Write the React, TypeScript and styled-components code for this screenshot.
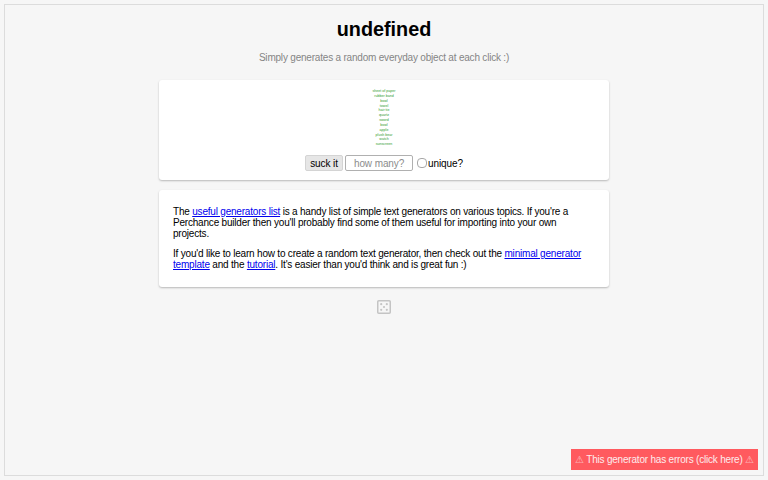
import React from "react";
import styled, { createGlobalStyle } from "styled-components";

const GlobalStyle = createGlobalStyle`
	html, body {
		margin: 0;
		height: 100%;
		background: #f6f6f6;
	}
	body {
		font-family: "Liberation Sans", Arial, sans-serif;
		overflow: hidden;
	}
`;

const Frame = styled.div`
	box-sizing: border-box;
	position: relative;
	width: 760px;
	height: 472px;
	margin: 4px;
	border: 1px solid #dcdcdc;
	display: flex;
	flex-direction: column;
	align-items: center;
`;

const Title = styled.h1`
	margin: 13px 0 0;
	font-size: 19.8px;
	line-height: 23px;
	font-weight: 700;
	color: #000;
`;

const Subtitle = styled.p`
	margin: 10px 0 0;
	font-size: 10px;
	letter-spacing: -0.2px;
	line-height: 13px;
	color: #858585;
`;

const Card = styled.section`
	box-sizing: border-box;
	width: 450px;
	background: #fff;
	border-radius: 3px;
	box-shadow: 0 1px 2px rgba(0, 0, 0, 0.25);
`;

const OutputCard = styled(Card)`
	margin-top: 16px;
	padding: 9px 0;
	height: 100px;
	display: flex;
	flex-direction: column;
	align-items: center;
`;

const ObjectList = styled.div`
	font-size: 3.6px;
	line-height: 4.85px;
	color: #2e9a2e;
	text-align: center;
	height: 58px;
`;

const Controls = styled.div`
	display: flex;
	align-items: center;
	margin-top: 8px;
	height: 16px;
`;

const SuckButton = styled.button`
	box-sizing: border-box;
	width: 38px;
	height: 16px;
	padding: 0;
	border: 1px solid #d4d4d4;
	border-radius: 2px;
	background: #e6e6e6;
	font-family: inherit;
	font-size: 10px;
	letter-spacing: -0.1px;
	color: #000;
`;

const CountInput = styled.input`
	box-sizing: border-box;
	width: 68px;
	height: 16px;
	margin-left: 2px;
	padding: 0;
	border: 1px solid #b0b0b0;
	border-radius: 2px;
	background: #fff;
	font-family: inherit;
	font-size: 10px;
	letter-spacing: -0.1px;
	text-align: center;

	&::placeholder {
		color: #8c8c8c;
	}
`;

const UniqueLabel = styled.label`
	display: flex;
	align-items: center;
	margin-left: 4px;
	font-size: 10px;
	letter-spacing: -0.1px;
	color: #000;
`;

const UniqueBox = styled.span`
	box-sizing: border-box;
	width: 10px;
	height: 10px;
	margin-right: 1px;
	border: 1px solid #a8a8a8;
	border-radius: 4px;
	background: #fff;
`;

const InfoCard = styled(Card)`
	margin-top: 10px;
	height: 97px;
	padding: 16px 15px 0 14px;
	font-size: 10px;
	letter-spacing: -0.2px;
	line-height: 11px;
	color: #000;
`;

const Paragraph = styled.p`
	margin: 0 0 9px;
`;

const TextLink = styled.a`
	color: #0000ee;
	text-decoration: underline;
`;

const DiceLink = styled.a`
	display: block;
	width: 14px;
	height: 14px;
	margin-top: 13px;
	color: #c4c4c4;
`;

const ErrorBadge = styled.button`
	position: absolute;
	right: 5px;
	bottom: 5px;
	box-sizing: border-box;
	width: 187px;
	height: 21px;
	padding: 0;
	border: 0;
	background: #ff5a5f;
	color: #fdeced;
	font-family: inherit;
	font-size: 10px;
	letter-spacing: -0.2px;
	white-space: nowrap;
`;

const WarnGlyph = styled.span`
	opacity: 0.6;
`;

const objects = [
	"sheet of paper",
	"rubber band",
	"bowl",
	"towel",
	"hair tie",
	"quartz",
	"sword",
	"bowl",
	"apple",
	"plush bear",
	"watch",
	"sunscreen",
];

function Dice() {
	return (
		<svg width="14" height="14" viewBox="0 0 14 14" fill="currentColor">
			<rect x="0.75" y="0.75" width="12.5" height="12.5" rx="1" fill="none" stroke="currentColor" strokeWidth="1.5" />
			<circle cx="4.2" cy="4.2" r="1.1" />
			<circle cx="9.8" cy="4.2" r="1.1" />
			<circle cx="7" cy="7" r="1.1" />
			<circle cx="4.2" cy="9.8" r="1.1" />
			<circle cx="9.8" cy="9.8" r="1.1" />
		</svg>
	);
}

export default function App() {
	return (
		<>
			<GlobalStyle />
			<Frame>
				<Title>undefined</Title>
				<Subtitle>Simply generates a random everyday object at each click :)</Subtitle>
				<OutputCard>
					<ObjectList>
						{objects.map((item, i) => (
							<div key={i}>{item}</div>
						))}
					</ObjectList>
					<Controls>
						<SuckButton>suck it</SuckButton>
						<CountInput placeholder="how many?" />
						<UniqueLabel>
							<UniqueBox />
							unique?
						</UniqueLabel>
					</Controls>
				</OutputCard>
				<InfoCard>
					<Paragraph>
						The <TextLink href="#">useful generators list</TextLink> is a handy list of simple text generators on various topics. If you're a Perchance builder then you'll probably find some of them useful for importing into your own projects.
					</Paragraph>
					<Paragraph>
						If you'd like to learn how to create a random text generator, then check out the <TextLink href="#">minimal generator template</TextLink> and the <TextLink href="#">tutorial</TextLink>. It's easier than you'd think and is great fun :)
					</Paragraph>
				</InfoCard>
				<DiceLink href="#">
					<Dice />
				</DiceLink>
				<ErrorBadge>
					<WarnGlyph>⚠</WarnGlyph> This generator has errors (click here) <WarnGlyph>⚠</WarnGlyph>
				</ErrorBadge>
			</Frame>
		</>
	);
}
